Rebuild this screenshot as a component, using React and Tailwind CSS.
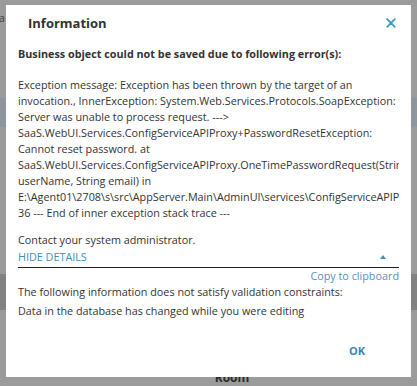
import React from 'react';

const font = { fontFamily: '"Open Sans", "Liberation Sans", sans-serif' };

// stack trace lines as they wrap in the dialog (long tokens are clipped)
const traceLines = [
    'Exception message: Exception has been thrown by the target of an',
    'invocation., InnerException: System.Web.Services.Protocols.SoapException:',
    'Server was unable to process request. --->',
    'SaaS.WebUI.Services.ConfigServiceAPIProxy+PasswordResetException:',
    'Cannot reset password. at',
    'SaaS.WebUI.Services.ConfigServiceAPIProxy.OneTimePasswordRequest(String',
    'userName, String email) in',
    'E:\\Agent01\\2708\\s\\src\\AppServer.Main\\AdminUI\\services\\ConfigServiceAPIProxy.cs:line',
    '36 --- End of inner exception stack trace ---',
];

export default function App() {
    return (
        <div className="relative w-[417px] h-[386px] overflow-hidden bg-[#9b9b9b]" style={font}>
            {/* page behind the overlay */}
            <div className="flex flex-col h-full">
                <div className="h-[11px]" />
                <div className="text-[11px] leading-[14px] text-[#3a3a3a] -ml-[14px]">Spa</div>
                <div className="h-[73px]" />
                <div className="h-[30px] bg-[#8e959c]" />
                <div className="h-[147px]" />
                <div className="h-[37px] bg-[#828282]" />
                <div className="h-[60px]" />
                <div className="flex justify-center pl-[47px]">
                    <span className="text-[12px] leading-[16px] font-bold text-[#2c2c2c]">Room</span>
                </div>
            </div>

            {/* dialog */}
            <div className="absolute left-[6px] top-[5px] w-[405px] h-[372px] bg-white flex flex-col">
                <div className="flex items-center justify-between pl-[22px] pr-[15px] pt-[9px]">
                    <h2 className="text-[13px] leading-[18px] font-bold text-[#333]">Information</h2>
                    <svg width="10" height="10" viewBox="0 0 10 10">
                        <path d="M1.2 1.2 L8.8 8.8 M8.8 1.2 L1.2 8.8" stroke="#3d9ac0" strokeWidth="1.8" strokeLinecap="round" />
                    </svg>
                </div>
                <div className="px-[12px] text-[10.8px] text-[#333] leading-[15.5px]">
                    <p className="font-bold mt-[14px]">Business object could not be saved due to following error(s):</p>
                    <div className="mt-[15.5px] overflow-hidden leading-[16px]">
                        {traceLines.map((line, i) => (
                            <div key={i} className="whitespace-nowrap">{line}</div>
                        ))}
                    </div>
                    <p className="mt-[11px]">Contact your system administrator.</p>
                    <div className="flex items-center justify-between border-b border-[#222] h-[20px] pb-[1px]">
                        <span className="text-[#3b8fc2]">HIDE DETAILS</span>
                        <span className="mr-[13px] w-0 h-0 border-l-[3px] border-r-[3px] border-b-[4px] border-l-transparent border-r-transparent border-b-[#3b8fc2]" />
                    </div>
                    <div className="text-right text-[#5b90b8]">Copy to clipboard</div>
                    <p className="mt-[0.5px]">The following information does not satisfy validation constraints:</p>
                    <p className="mt-[3.5px]">Data in the database has changed while you were editing</p>
                </div>
                <div className="flex-1 flex items-end justify-end pr-[46px] pb-[19px]">
                    <span className="text-[11px] leading-[15.5px] font-bold text-[#3b85b8]">OK</span>
                </div>
            </div>
        </div>
    );
}
